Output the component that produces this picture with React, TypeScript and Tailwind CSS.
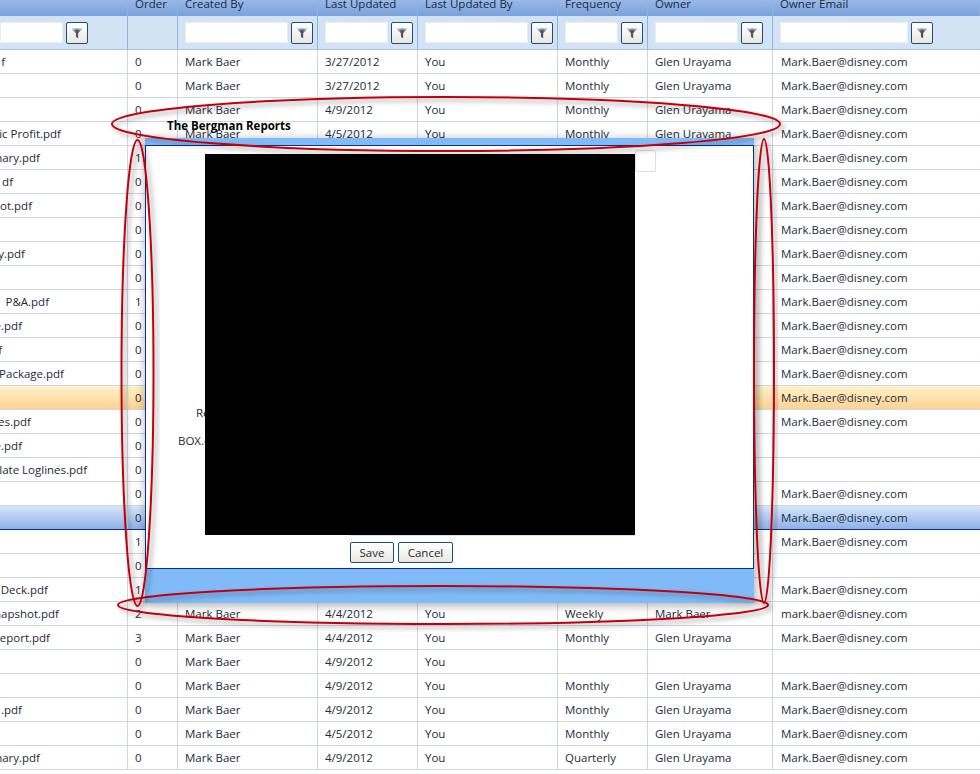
type Row = {
    name?: string;
    nameEnd?: string;
    order: string;
    by?: string;
    updated?: string;
    you?: boolean;
    freq?: string;
    owner?: string;
    email?: string;
    tone?: 'orange' | 'blue';
};

const MARK = 'Mark.Baer@disney.com';
const GLEN = 'Glen Urayama';

const std = (updated: string, email: string | undefined = MARK) => ({
    by: 'Mark Baer',
    updated,
    you: true,
    freq: 'Monthly',
    owner: GLEN,
    email,
});

const ROWS: Row[] = [
    { name: 'f', nameEnd: 'pr-[122px]', order: '0', ...std('3/27/2012') },
    { order: '0', ...std('3/27/2012') },
    { order: '0', ...std('4/9/2012') },
    { name: 'ic Profit.pdf', nameEnd: 'pr-[66px]', order: '0', ...std('4/5/2012') },
    { name: 'nary.pdf', nameEnd: 'pr-[87px]', order: '1', email: MARK },
    { name: 'df', nameEnd: 'pr-[114px]', order: '0', email: MARK },
    { name: 'ot.pdf', nameEnd: 'pr-[95px]', order: '0', email: MARK },
    { order: '0', email: MARK },
    { name: 'y.pdf', nameEnd: 'pr-[102px]', order: '0', email: MARK },
    { order: '0', email: MARK },
    { name: 'P&A.pdf', nameEnd: 'pr-[78px]', order: '1', email: MARK },
    { name: 'e.pdf', nameEnd: 'pr-[105px]', order: '0', email: MARK },
    { name: 'f', nameEnd: 'pr-[125px]', order: '0', email: MARK },
    { name: 'Package.pdf', nameEnd: 'pr-[63px]', order: '0', email: MARK },
    { order: '0', email: MARK, tone: 'orange' },
    { name: 'es.pdf', nameEnd: 'pr-[96px]', order: '0', email: MARK },
    { name: 'e.pdf', nameEnd: 'pr-[105px]', order: '0' },
    { name: 'late Loglines.pdf', nameEnd: 'pr-[40px]', order: '0' },
    { order: '0', email: MARK },
    { order: '0', email: MARK, tone: 'blue' },
    { order: '1', email: MARK },
    { order: '0' },
    { name: 'Deck.pdf', nameEnd: 'pr-[79px]', order: '1', email: MARK },
    {
        name: 'napshot.pdf',
        nameEnd: 'pr-[68px]',
        order: '2',
        by: 'Mark Baer',
        updated: '4/4/2012',
        you: true,
        freq: 'Weekly',
        owner: 'Mark Baer',
        email: 'mark.baer@disney.com',
    },
    { name: 'eport.pdf', nameEnd: 'pr-[77px]', order: '3', ...std('4/4/2012') },
    { order: '0', by: 'Mark Baer', updated: '4/9/2012', you: true },
    { order: '0', ...std('4/9/2012') },
    { name: '.pdf', nameEnd: 'pr-[105px]', order: '0', ...std('4/9/2012') },
    { order: '0', ...std('4/5/2012') },
    { name: 'nary.pdf', nameEnd: 'pr-[87px]', order: '0', ...std('4/9/2012'), freq: 'Quarterly' },
];

const GRID = 'grid grid-cols-[128px_50px_140px_100px_140px_90px_125px_1fr]';

function FilterIcon() {
    return (
        <svg width="12" height="12" viewBox="0 0 12 12">
            <defs>
                <linearGradient id="funnel" x1="0" y1="0" x2="1" y2="0">
                    <stop offset="0" stopColor="#c3cad4" />
                    <stop offset="0.5" stopColor="#3a4c62" />
                    <stop offset="1" stopColor="#b4bdc9" />
                </linearGradient>
            </defs>
            <path d="M0.5 1.5h11L7.2 6.3v5L4.9 10V6.3z" fill="url(#funnel)" />
            <path d="M2 2h8" stroke="#e8ecf1" strokeWidth="0.8" />
        </svg>
    );
}

function Filter({ input, className = '' }: { input: string; className?: string }) {
    return (
        <div className={`flex h-[34px] items-center gap-[3px] border-r border-b border-r-[#8fb2e4] border-b-[#a9c3e6] pl-[7px] ${className}`}>
            <div className={`h-[21px] border border-[#e4eefa] bg-white ${input}`} />
            <div className="flex h-[22px] w-[22px] items-center justify-center rounded-[2px] border border-[#1d4f7d] bg-gradient-to-b from-white to-[#ebe7dc]">
                <FilterIcon />
            </div>
        </div>
    );
}

function Cell({ children }: { children?: React.ReactNode }) {
    return <div className="flex items-center overflow-hidden border-r border-[#cdd6e4] pt-px pl-[7px] whitespace-nowrap">{children}</div>;
}

function TableRow({ row }: { row: Row }) {
    const tone =
        row.tone === 'orange'
            ? 'bg-gradient-to-b from-[#fff2c9] to-[#ffd292] border-b-[#cdd6e4]'
            : row.tone === 'blue'
              ? 'bg-gradient-to-b from-[#d8e7fb] to-[#8eb1e6] border-b-[#0b2f8a]'
              : 'border-b-[#cdd6e4]';
    return (
        <div className={`${GRID} h-6 border-b ${tone}`}>
            <div className={`flex items-center justify-end overflow-hidden border-r border-[#cdd6e4] pt-px whitespace-nowrap ${row.nameEnd ?? ''}`}>{row.name}</div>
            <Cell>{row.order}</Cell>
            <Cell>{row.by}</Cell>
            <Cell>{row.updated}</Cell>
            <Cell>{row.you ? 'You' : ''}</Cell>
            <Cell>{row.freq}</Cell>
            <Cell>{row.owner}</Cell>
            <div className="flex items-center overflow-hidden pt-px pl-2 whitespace-nowrap">{row.email}</div>
        </div>
    );
}

function ReportGrid() {
    return (
        <div>
            <div className={`${GRID} h-4 bg-gradient-to-b from-[#9ab8e8] to-[#79a1dc] leading-[8px]`}>
                {['', 'Order', 'Created By', 'Last Updated', 'Last Updated By', 'Frequency', 'Owner', 'Owner Email'].map((label, i) => (
                    <div key={i} className="overflow-hidden border-r border-[#8fb2e4] pl-[7px] whitespace-nowrap">
                        {label}
                    </div>
                ))}
            </div>
            <div className={`${GRID} bg-[#d3e3f4]`}>
                <div className="flex h-[34px] items-center justify-end gap-[3px] border-r border-b border-r-[#8fb2e4] border-b-[#a9c3e6] pr-[39px]">
                    <div className="h-[21px] w-16 border border-[#e4eefa] bg-white" />
                    <div className="flex h-[22px] w-[22px] shrink-0 items-center justify-center rounded-[2px] border border-[#1d4f7d] bg-gradient-to-b from-white to-[#ebe7dc]">
                        <FilterIcon />
                    </div>
                </div>
                <div className="h-[34px] border-r border-b border-r-[#8fb2e4] border-b-[#a9c3e6]" />
                <Filter input="w-[103px]" />
                <Filter input="w-[63px]" />
                <Filter input="w-[103px]" />
                <Filter input="w-[53px]" />
                <Filter input="w-[83px]" />
                <Filter input="w-[128px]" className="border-r-0" />
            </div>
            {ROWS.map((row, i) => (
                <TableRow key={i} row={row} />
            ))}
        </div>
    );
}

function ReportDialog() {
    return (
        <div className="absolute top-[138px] left-[145px] flex h-[465px] w-[609px] flex-col bg-[#80bbf8] pt-[7px] pb-[34px] shadow-[1px_2px_10px_rgba(0,0,0,0.35)]">
            <div className="relative flex-1 border border-[#0b2f8a] bg-white">
                <div className="absolute top-[4px] left-[489px] h-[22px] w-[21px] rounded-[2px] border border-[#dcdfe4]" />
                <div className="absolute top-[258px] left-[50px]">Re</div>
                <div className="absolute top-[286px] left-[32px]">BOX.c</div>
                <div className="absolute top-2 left-[59px] h-[381px] w-[430px] bg-black" />
                <div className="absolute top-[389px] left-[204px] h-px w-[285px] bg-[#d6e4f6]" />
                <div className="absolute top-[396px] left-[204px] flex gap-1">
                    <DialogButton label="Save" width="w-11" />
                    <DialogButton label="Cancel" width="w-[55px]" />
                </div>
            </div>
        </div>
    );
}

function DialogButton({ label, width }: { label: string; width: string }) {
    return (
        <div className={`flex h-[21px] items-center justify-center rounded-[2px] border border-[#1d4f7d] bg-gradient-to-b from-white to-[#ebe7dc] ${width}`}>
            {label}
        </div>
    );
}

function Annotations() {
    const stroke = { fill: 'none', stroke: '#c00010', strokeWidth: 2, filter: 'url(#marker-shadow)' };
    return (
        <svg className="absolute top-0 left-0" width="980" height="774" viewBox="0 0 980 774">
            <defs>
                <filter id="marker-shadow" x="-20%" y="-20%" width="140%" height="140%">
                    <feDropShadow dx="3" dy="3" stdDeviation="2.5" floodColor="#000" floodOpacity="0.4" />
                </filter>
            </defs>
            <ellipse cx="446" cy="124" rx="334" ry="27" {...stroke} />
            <ellipse cx="443" cy="605" rx="325" ry="19" {...stroke} />
            <ellipse cx="137.5" cy="373" rx="16" ry="233" {...stroke} />
            <ellipse cx="764" cy="371" rx="10" ry="232" {...stroke} />
        </svg>
    );
}

export default function App() {
    return (
        <div className="relative h-[774px] w-[980px] overflow-hidden bg-white font-['Open_Sans',sans-serif] text-[11.5px] text-[#1c2b3d]">
            <ReportGrid />
            <ReportDialog />
            <div className="absolute top-[117px] left-[167px] font-bold text-black">The Bergman Reports</div>
            <Annotations />
        </div>
    );
}
